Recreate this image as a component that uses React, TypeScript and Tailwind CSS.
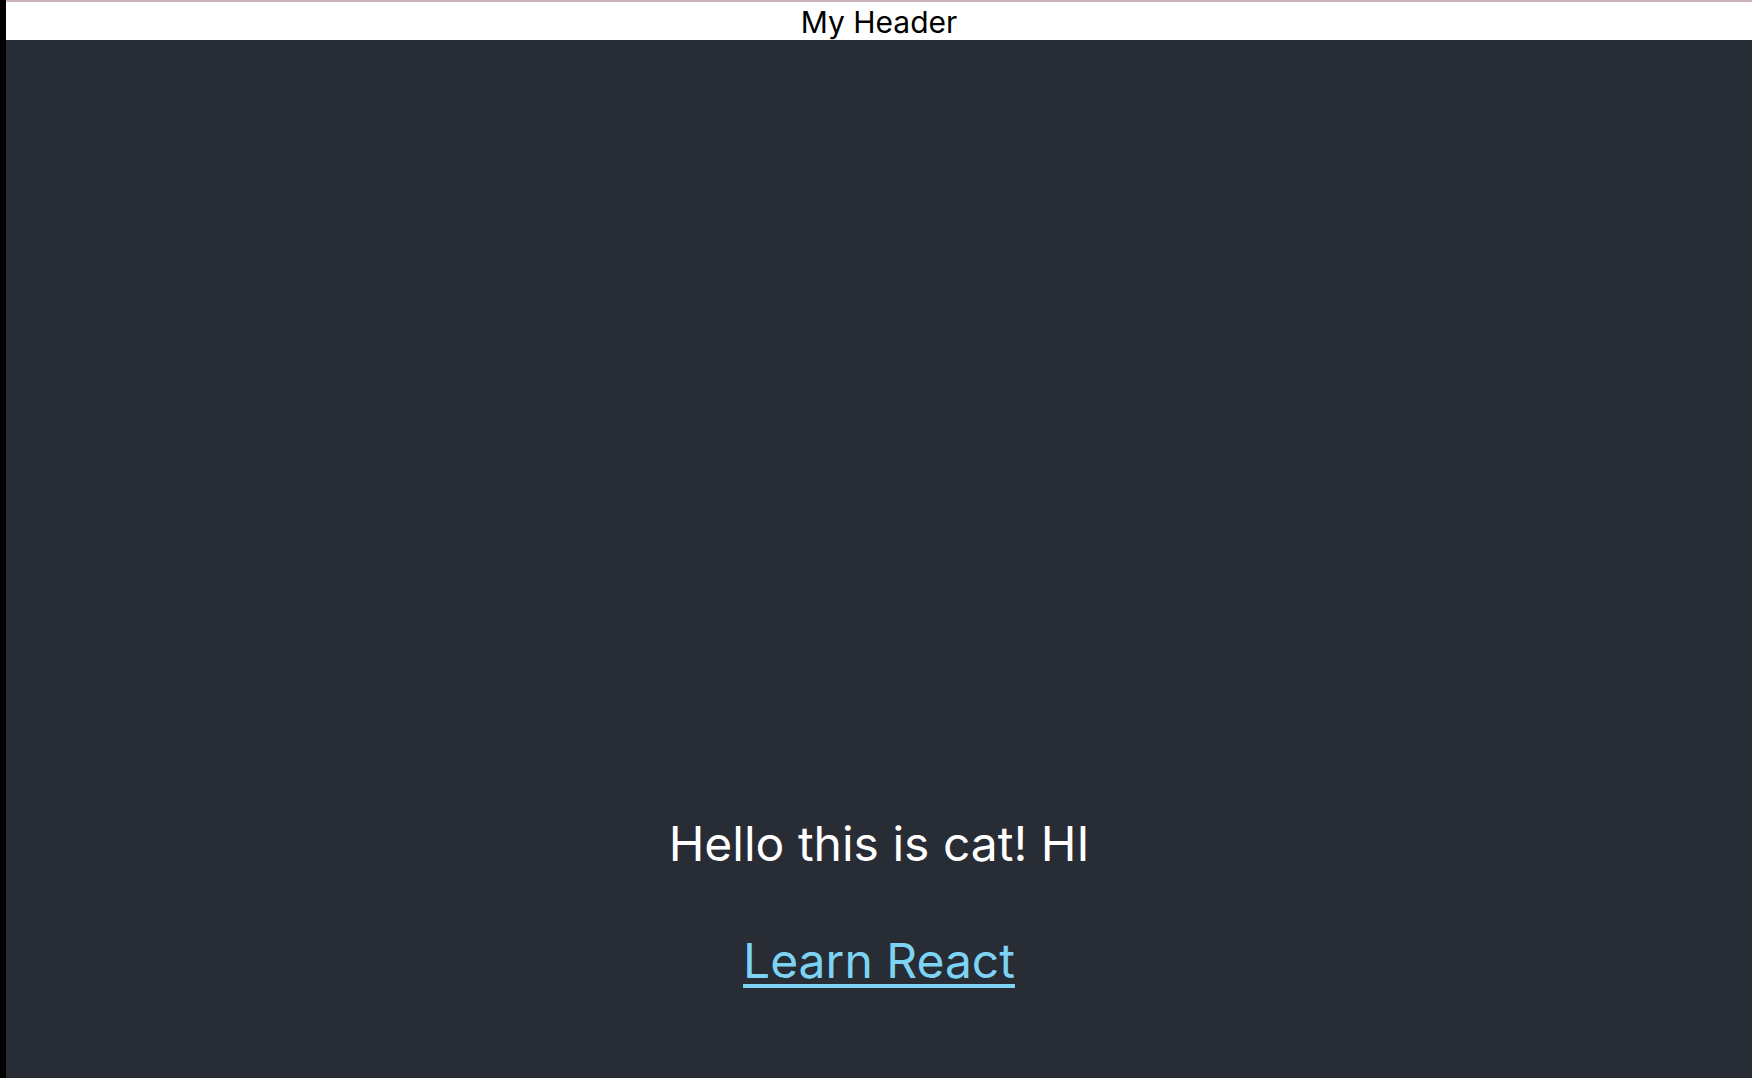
import React from "react";

export default function App() {
  return (
    <div className="flex h-[1078px] w-[1752px] bg-black" style={{ fontFamily: "Inter, 'Noto Sans', sans-serif" }}>
      <div className="w-[6px] shrink-0 bg-black" />
      <div className="flex flex-1 flex-col">
        <div className="h-[2px] bg-[#cab5bc]" />
        <header className="flex h-[38px] items-center justify-center bg-white pt-[1px] text-[30px] leading-none text-black">
          My Header
        </header>
        <main className="flex flex-1 flex-col items-center bg-[#282c34] pt-[775px] text-white">
          <p className="text-[48px] leading-[58px]">Hello this is cat! HI</p>
          <a
            href="#"
            className="mt-[59px] text-[48px] leading-[58px] text-[#7dd3f3] underline decoration-[4px] underline-offset-[6px]"
          >
            Learn React
          </a>
        </main>
      </div>
    </div>
  );
}
